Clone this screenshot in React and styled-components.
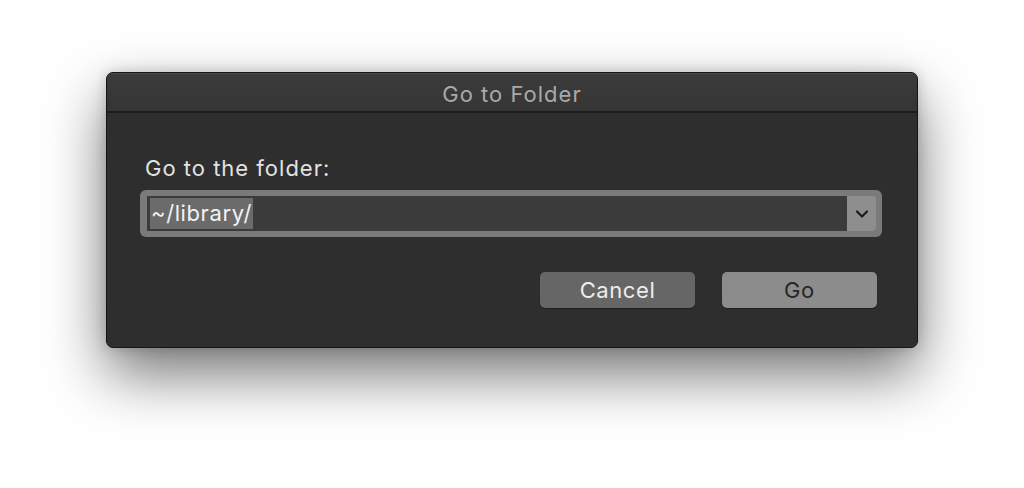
import React from "react";
import styled, { createGlobalStyle } from "styled-components";

const GlobalStyle = createGlobalStyle`
  html, body {
    margin: 0;
    padding: 0;
    background: #ffffff;
  }
  body {
    font-family: Inter, "Liberation Sans", Arial, sans-serif;
  }
`;

export default function App() {
  return (
    <Page>
      <GlobalStyle />
      <Dialog>
        <TitleBar>Go to Folder</TitleBar>
        <Body>
          <Label>Go to the folder:</Label>
          <ComboRing>
            <Field>
              <Selected>~/library/</Selected>
            </Field>
            <DropButton>
              <svg width="14" height="10" viewBox="0 0 14 10">
                <path
                  d="M2 2.5 L7 7.5 L12 2.5"
                  fill="none"
                  stroke="#1c1c1c"
                  strokeWidth="2.2"
                  strokeLinecap="round"
                  strokeLinejoin="round"
                />
              </svg>
            </DropButton>
          </ComboRing>
          <Actions>
            <Button>Cancel</Button>
            <Button $primary>Go</Button>
          </Actions>
        </Body>
      </Dialog>
    </Page>
  );
}

const Page = styled.div`
  width: 1024px;
  height: 488px;
  padding-top: 72px;
  padding-left: 106px;
  box-sizing: border-box;
  overflow: hidden;
`;

const Dialog = styled.div`
  width: 812px;
  height: 276px;
  box-sizing: border-box;
  background: #2e2e2e;
  border: 1px solid #151515;
  border-radius: 7px;
  box-shadow: 0 26px 60px rgba(0, 0, 0, 0.55), 0 0 14px rgba(0, 0, 0, 0.18);
  overflow: hidden;
  display: flex;
  flex-direction: column;
`;

const TitleBar = styled.div`
  height: 40px;
  flex-shrink: 0;
  background: linear-gradient(#3b3b3b, #353535);
  border-top: 1px solid #4a4a4a;
  border-bottom: 2px solid #1c1c1c;
  box-sizing: border-box;
  display: flex;
  align-items: center;
  justify-content: center;
  color: #a9a9a9;
  font-size: 22px;
  letter-spacing: 1px;
  padding-top: 3px;
`;

const Body = styled.div`
  flex: 1;
  padding: 43px 35px 0 33px;
  display: flex;
  flex-direction: column;
`;

const Label = styled.div`
  color: #e2e2e2;
  font-size: 22px;
  letter-spacing: 1px;
  padding-left: 5px;
  line-height: 24px;
`;

const ComboRing = styled.div`
  margin-top: 10px;
  height: 47px;
  box-sizing: border-box;
  background: #7a7a7a;
  border-radius: 6px;
  padding: 6px 6px 6px 7px;
  display: flex;
`;

const Field = styled.div`
  flex: 1;
  background: #3b3b3b;
  display: flex;
  align-items: center;
  padding-left: 3px;
`;

const Selected = styled.span`
  background: #6b6b6b;
  color: #f2f2f2;
  font-size: 22px;
  letter-spacing: 0.6px;
  line-height: 31px;
  padding: 0 1px;
`;

const DropButton = styled.div`
  width: 29px;
  background: #8e8e8e;
  border-radius: 0 4px 4px 0;
  display: flex;
  align-items: center;
  justify-content: center;
`;

const Actions = styled.div`
  margin-top: 35px;
  display: flex;
  justify-content: flex-end;
  gap: 27px;
  padding-right: 5px;
`;

const Button = styled.div`
  width: 155px;
  height: 36px;
  box-sizing: border-box;
  border-radius: 5px;
  display: flex;
  align-items: center;
  justify-content: center;
  font-size: 22px;
  letter-spacing: 0.6px;
  background: ${(p) => (p.$primary ? "#8c8c8c" : "#666666")};
  color: ${(p) => (p.$primary ? "#262626" : "#ededed")};
  box-shadow: 0 1px 1px rgba(0, 0, 0, 0.35);
`;
